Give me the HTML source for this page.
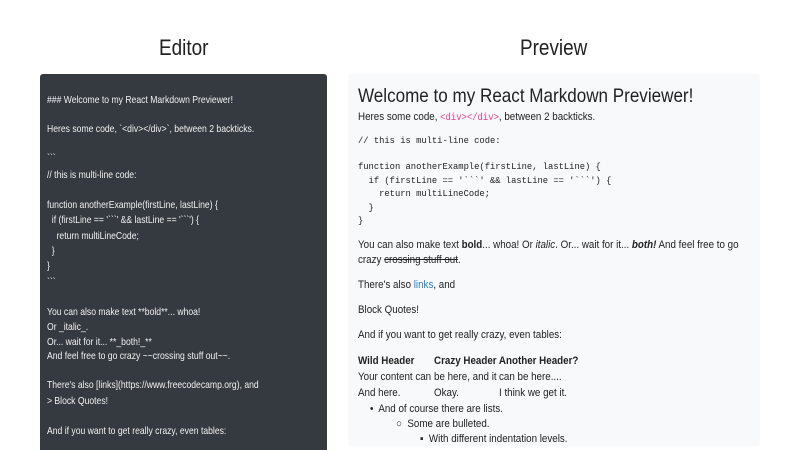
<!DOCTYPE html>
<html><head><meta charset="utf-8"><style>
body{margin:0;width:800px;height:450px;overflow:hidden;background:#fff;font-family:"Liberation Sans",sans-serif;position:relative}
.t{position:absolute;white-space:pre;line-height:16px;transform-origin:0 50%}
.h{font-size:22px;color:#222;top:40px;transform:scaleX(0.86)}
#ed{position:absolute;left:40px;top:74px;width:287px;height:376px;background:#343a40;border-radius:3px 3px 0 0}
#pv{position:absolute;left:348px;top:74px;width:412px;height:372px;background:#f8f9fa;border-radius:3px}
.e{color:#f1f1f1;font-size:10.5px;left:47px;transform:scaleX(0.82)}
.p{color:#222;font-size:11px;left:358px;transform:scaleX(0.89)}
.m{font-family:"Liberation Mono",monospace;font-size:8.8px;color:#222;left:358px}
code{font-family:"Liberation Mono",monospace;color:#e83e8c;font-size:10px}
</style></head><body>
<div class="t h" style="left:159px">Editor</div>
<div class="t h" style="left:520px">Preview</div>
<div id="ed"></div><div id="pv"></div>
<div class="t e" style="top:92px">### Welcome to my React Markdown Previewer!</div>
<div class="t e" style="top:121px">Heres some code, &#96;&lt;div&gt;&lt;/div&gt;&#96;, between 2 backticks.</div>
<div class="t e" style="top:150px">&#96;&#96;&#96;</div>
<div class="t e" style="top:167px">// this is multi-line code:</div>
<div class="t e" style="top:197px">function anotherExample(firstLine, lastLine) {</div>
<div class="t e" style="top:212px">  if (firstLine == '&#96;&#96;&#96;' &amp;&amp; lastLine == '&#96;&#96;&#96;') {</div>
<div class="t e" style="top:228px">    return multiLineCode;</div>
<div class="t e" style="top:243px">  }</div>
<div class="t e" style="top:258px">}</div>
<div class="t e" style="top:274px">&#96;&#96;&#96;</div>
<div class="t e" style="top:304px">You can also make text **bold**... whoa!</div>
<div class="t e" style="top:319px">Or _italic_.</div>
<div class="t e" style="top:334px">Or... wait for it... **_both!_**</div>
<div class="t e" style="top:348px">And feel free to go crazy ~~crossing stuff out~~.</div>
<div class="t e" style="top:377px">There's also [links](https://www.freecodecamp.org), and</div>
<div class="t e" style="top:393px">&gt; Block Quotes!</div>
<div class="t e" style="top:423px">And if you want to get really crazy, even tables:</div>

<div class="t" style="left:358px;top:84px;font-size:19.5px;line-height:24px;color:#222;transform:scaleX(0.875)">Welcome to my React Markdown Previewer!</div>
<div class="t p" style="top:109px">Heres some code, <code>&lt;div&gt;&lt;/div&gt;</code>, between 2 backticks.</div>
<div class="t m" style="top:133px">// this is multi-line code:</div>
<div class="t m" style="top:159px">function anotherExample(firstLine, lastLine) {</div>
<div class="t m" style="top:173px">  if (firstLine == '&#96;&#96;&#96;' &amp;&amp; lastLine == '&#96;&#96;&#96;') {</div>
<div class="t m" style="top:186px">    return multiLineCode;</div>
<div class="t m" style="top:200px">  }</div>
<div class="t m" style="top:213px">}</div>
<div class="t p" style="top:237px">You can also make text <b>bold</b>... whoa! Or <i>italic</i>. Or... wait for it... <b><i>both!</i></b> And feel free to go</div>
<div class="t p" style="top:252px">crazy <s>crossing stuff out</s>.</div>
<div class="t p" style="top:277px">There's also <span style="color:#2a7fc4">links</span>, and</div>
<div class="t p" style="top:302px">Block Quotes!</div>
<div class="t p" style="top:327px">And if you want to get really crazy, even tables:</div>
<div class="t p" style="top:353px;font-weight:bold">Wild Header</div>
<div class="t p" style="top:353px;left:434px;font-weight:bold">Crazy Header Another Header?</div>
<div class="t p" style="top:369px">Your content can</div>
<div class="t p" style="top:369px;left:434px">be here, and it</div>
<div class="t p" style="top:369px;left:499px">can be here....</div>
<div class="t p" style="top:385px">And here.</div>
<div class="t p" style="top:385px;left:434px">Okay.</div>
<div class="t p" style="top:385px;left:499px">I think we get it.</div>
<div class="t p" style="top:401px;left:370px">•  And of course there are lists.</div>
<div class="t p" style="top:416px;left:396px">○  Some are bulleted.</div>
<div class="t p" style="top:431px;left:420px">▪  With different indentation levels.</div>
</body></html>
